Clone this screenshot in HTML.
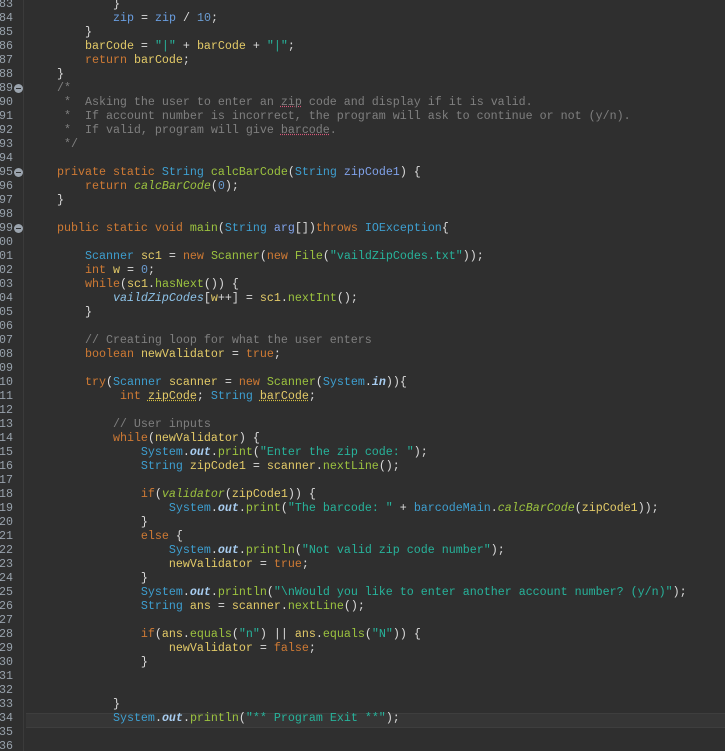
<!DOCTYPE html>
<html><head><meta charset="utf-8"><style>
html,body{margin:0;padding:0;background:#2f2f2f;width:725px;height:751px;overflow:hidden}
body{position:relative;font-family:"Liberation Mono",monospace;font-size:11.67px;color:#dcdcdc}
.g{position:absolute;left:23px;top:0;width:1px;height:751px;background:#3b3b3b}
.cur{position:absolute;left:26px;right:0;top:713px;height:13px;background:#363636;border-top:1px solid #3e3e3e;border-bottom:1px solid #3e3e3e}
.ln{position:absolute;right:712px;width:60px;text-align:right;color:#98a2ac;white-space:pre;line-height:14px;height:14px}
.code{position:absolute;left:29px;white-space:pre;line-height:14px;height:14px}
.fold{position:absolute;left:14px;width:9px;height:9px;border-radius:50%;background:#9aa3ad}
.fold:after{content:"";position:absolute;left:2px;top:4px;width:5px;height:1px;background:#2f2f2f}
.k{color:#cf7a34}.t{color:#3e9fd0}.f{color:#6a9ee0}.v{color:#e4cb68}.p{color:#80a2ea}
.m{color:#9cc33f}.si{color:#9cc33f;font-style:italic}.s{color:#27b39b}.c{color:#7f7f7f}
.n{color:#6b9cd1}.o{color:#a8cdf0;font-weight:bold;font-style:italic}.fi{color:#8ec3e8;font-style:italic}
.sq{text-decoration:underline dotted #d8577a}.sy{text-decoration:underline dotted #d8c040}
</style></head><body>
<div class="g"></div>
<div class="cur"></div>
<div class="ln" style="top:-3px">83</div><div class="code" style="top:-3px">            }</div>
<div class="ln" style="top:11px">84</div><div class="code" style="top:11px">            <span class="f">zip</span> = <span class="f">zip</span> / <span class="n">10</span>;</div>
<div class="ln" style="top:25px">85</div><div class="code" style="top:25px">        }</div>
<div class="ln" style="top:39px">86</div><div class="code" style="top:39px">        <span class="v">barCode</span> = <span class="s">"|"</span> + <span class="v">barCode</span> + <span class="s">"|"</span>;</div>
<div class="ln" style="top:53px">87</div><div class="code" style="top:53px">        <span class="k">return</span> <span class="v">barCode</span>;</div>
<div class="ln" style="top:67px">88</div><div class="code" style="top:67px">    }</div>
<div class="ln" style="top:81px">89</div><div class="fold" style="top:84px"></div><div class="code c" style="top:81px">    /*</div>
<div class="ln" style="top:95px">90</div><div class="code c" style="top:95px">     *  Asking the user to enter an <span class="sq">zip</span> code and display if it is valid.</div>
<div class="ln" style="top:109px">91</div><div class="code c" style="top:109px">     *  If account number is incorrect, the program will ask to continue or not (y/n).</div>
<div class="ln" style="top:123px">92</div><div class="code c" style="top:123px">     *  If valid, program will give <span class="sq">barcode</span>.</div>
<div class="ln" style="top:137px">93</div><div class="code c" style="top:137px">     */</div>
<div class="ln" style="top:151px">94</div>
<div class="ln" style="top:165px">95</div><div class="fold" style="top:168px"></div><div class="code" style="top:165px">    <span class="k">private static</span> <span class="t">String</span> <span class="m">calcBarCode</span>(<span class="t">String</span> <span class="p">zipCode1</span>) {</div>
<div class="ln" style="top:179px">96</div><div class="code" style="top:179px">        <span class="k">return</span> <span class="si">calcBarCode</span>(<span class="n">0</span>);</div>
<div class="ln" style="top:193px">97</div><div class="code" style="top:193px">    }</div>
<div class="ln" style="top:207px">98</div>
<div class="ln" style="top:221px">99</div><div class="fold" style="top:224px"></div><div class="code" style="top:221px">    <span class="k">public static void</span> <span class="m">main</span>(<span class="t">String</span> <span class="p">arg</span>[])<span class="k">throws</span> <span class="t">IOException</span>{</div>
<div class="ln" style="top:235px">100</div>
<div class="ln" style="top:249px">101</div><div class="code" style="top:249px">        <span class="t">Scanner</span> <span class="v">sc1</span> = <span class="k">new</span> <span class="m">Scanner</span>(<span class="k">new</span> <span class="m">File</span>(<span class="s">"vaildZipCodes.txt"</span>));</div>
<div class="ln" style="top:263px">102</div><div class="code" style="top:263px">        <span class="k">int</span> <span class="v">w</span> = <span class="n">0</span>;</div>
<div class="ln" style="top:277px">103</div><div class="code" style="top:277px">        <span class="k">while</span>(<span class="v">sc1</span>.<span class="m">hasNext</span>()) {</div>
<div class="ln" style="top:291px">104</div><div class="code" style="top:291px">            <span class="fi">vaildZipCodes</span>[<span class="v">w</span>++] = <span class="v">sc1</span>.<span class="m">nextInt</span>();</div>
<div class="ln" style="top:305px">105</div><div class="code" style="top:305px">        }</div>
<div class="ln" style="top:319px">106</div>
<div class="ln" style="top:333px">107</div><div class="code c" style="top:333px">        // Creating loop for what the user enters</div>
<div class="ln" style="top:347px">108</div><div class="code" style="top:347px">        <span class="k">boolean</span> <span class="v">newValidator</span> = <span class="k">true</span>;</div>
<div class="ln" style="top:361px">109</div>
<div class="ln" style="top:375px">110</div><div class="code" style="top:375px">        <span class="k">try</span>(<span class="t">Scanner</span> <span class="v">scanner</span> = <span class="k">new</span> <span class="m">Scanner</span>(<span class="t">System</span>.<span class="o">in</span>)){</div>
<div class="ln" style="top:389px">111</div><div class="code" style="top:389px">             <span class="k">int</span> <span class="v sy">zipCode</span>; <span class="t">String</span> <span class="v sy">barCode</span>;</div>
<div class="ln" style="top:403px">112</div>
<div class="ln" style="top:417px">113</div><div class="code c" style="top:417px">            // User inputs</div>
<div class="ln" style="top:431px">114</div><div class="code" style="top:431px">            <span class="k">while</span>(<span class="v">newValidator</span>) {</div>
<div class="ln" style="top:445px">115</div><div class="code" style="top:445px">                <span class="t">System</span>.<span class="o">out</span>.<span class="m">print</span>(<span class="s">"Enter the zip code: "</span>);</div>
<div class="ln" style="top:459px">116</div><div class="code" style="top:459px">                <span class="t">String</span> <span class="v">zipCode1</span> = <span class="v">scanner</span>.<span class="m">nextLine</span>();</div>
<div class="ln" style="top:473px">117</div>
<div class="ln" style="top:487px">118</div><div class="code" style="top:487px">                <span class="k">if</span>(<span class="si">validator</span>(<span class="v">zipCode1</span>)) {</div>
<div class="ln" style="top:501px">119</div><div class="code" style="top:501px">                    <span class="t">System</span>.<span class="o">out</span>.<span class="m">print</span>(<span class="s">"The barcode: "</span> + <span class="t">barcodeMain</span>.<span class="si">calcBarCode</span>(<span class="v">zipCode1</span>));</div>
<div class="ln" style="top:515px">120</div><div class="code" style="top:515px">                }</div>
<div class="ln" style="top:529px">121</div><div class="code" style="top:529px">                <span class="k">else</span> {</div>
<div class="ln" style="top:543px">122</div><div class="code" style="top:543px">                    <span class="t">System</span>.<span class="o">out</span>.<span class="m">println</span>(<span class="s">"Not valid zip code number"</span>);</div>
<div class="ln" style="top:557px">123</div><div class="code" style="top:557px">                    <span class="v">newValidator</span> = <span class="k">true</span>;</div>
<div class="ln" style="top:571px">124</div><div class="code" style="top:571px">                }</div>
<div class="ln" style="top:585px">125</div><div class="code" style="top:585px">                <span class="t">System</span>.<span class="o">out</span>.<span class="m">println</span>(<span class="s">"\nWould you like to enter another account number? (y/n)"</span>);</div>
<div class="ln" style="top:599px">126</div><div class="code" style="top:599px">                <span class="t">String</span> <span class="v">ans</span> = <span class="v">scanner</span>.<span class="m">nextLine</span>();</div>
<div class="ln" style="top:613px">127</div>
<div class="ln" style="top:627px">128</div><div class="code" style="top:627px">                <span class="k">if</span>(<span class="v">ans</span>.<span class="m">equals</span>(<span class="s">"n"</span>) || <span class="v">ans</span>.<span class="m">equals</span>(<span class="s">"N"</span>)) {</div>
<div class="ln" style="top:641px">129</div><div class="code" style="top:641px">                    <span class="v">newValidator</span> = <span class="k">false</span>;</div>
<div class="ln" style="top:655px">130</div><div class="code" style="top:655px">                }</div>
<div class="ln" style="top:669px">131</div>
<div class="ln" style="top:683px">132</div>
<div class="ln" style="top:697px">133</div><div class="code" style="top:697px">            }</div>
<div class="ln" style="top:711px">134</div><div class="code" style="top:711px">            <span class="t">System</span>.<span class="o">out</span>.<span class="m">println</span>(<span class="s">"** Program Exit **"</span>);</div>
<div class="ln" style="top:725px">135</div>
<div class="ln" style="top:739px">136</div>
</body></html>
